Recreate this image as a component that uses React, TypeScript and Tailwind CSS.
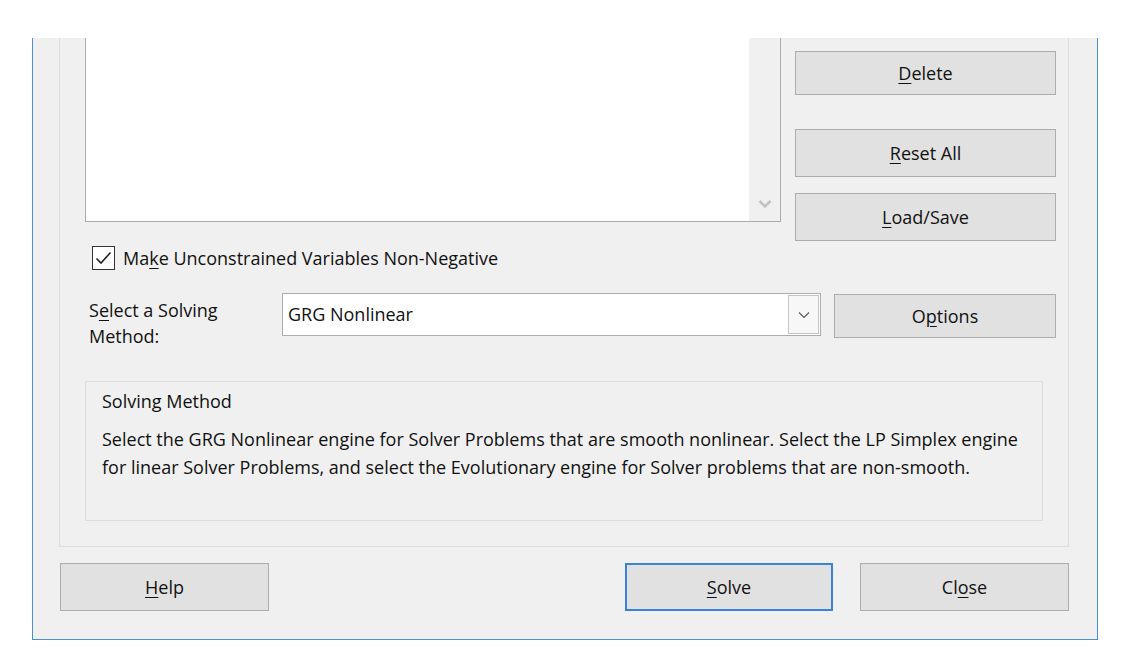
import type { ReactNode } from "react";

const FONT = { fontFamily: '"Open Sans", "Noto Sans", sans-serif' };

function Key({ children }: { children: ReactNode }) {
  return <span className="underline underline-offset-[3px] decoration-1">{children}</span>;
}

function WinButton({
  children,
  className = "",
  focused = false,
}: {
  children: ReactNode;
  className?: string;
  focused?: boolean;
}) {
  return (
    <button
      type="button"
      className={`flex items-center justify-center bg-[#e1e1e1] text-[18px] text-[#111] ${
        focused ? "border-2 border-[#3b83d6]" : "border border-[#adadad]"
      } ${className}`}
    >
      {children}
    </button>
  );
}

export default function App() {
  return (
    <div className="min-h-screen bg-white pt-[38px] pl-[32px]" style={FONT}>
      <div className="w-[1066px] h-[602px] bg-[#f0f0f0] border-x border-b border-[#4b8fd5] flex flex-col">
        {/* Group box (top is cut off) */}
        <div className="ml-[26px] w-[1010px] h-[509px] border-x border-b border-[#dcdcdc] flex flex-col">
          {/* Constraint list + side buttons */}
          <div className="flex items-start">
            <div className="ml-[25px] w-[696px] h-[184px] bg-white border-x border-b border-[#ababab] flex justify-end">
              <div className="w-[31px] bg-[#f0f0f0] flex items-end justify-center pb-[12px]">
                <svg width="14" height="10" viewBox="0 0 14 10">
                  <path d="M1.5 2 L7 7.5 L12.5 2" fill="none" stroke="#c2c2c2" strokeWidth="2.6" />
                </svg>
              </div>
            </div>
            <div className="ml-[14px] w-[261px] flex flex-col">
              <WinButton className="mt-[13px] h-[44px]">
                <Key>D</Key>elete
              </WinButton>
              <WinButton className="mt-[34px] h-[48px]">
                <Key>R</Key>eset All
              </WinButton>
              <WinButton className="mt-[16px] h-[48px]">
                <Key>L</Key>oad/Save
              </WinButton>
            </div>
          </div>

          {/* Non-negative checkbox */}
          <div className="mt-[4px] ml-[32px] flex items-center h-[25px]">
            <div className="w-[23px] h-[24px] border border-[#333] bg-white flex items-center justify-center">
              <svg width="17" height="14" viewBox="0 0 17 14">
                <path d="M1.5 7.5 L6 12 L15.5 1.5" fill="none" stroke="#222" strokeWidth="1.6" />
              </svg>
            </div>
            <span className="ml-[8px] mt-[2px] text-[18px] text-[#111]">
              Ma<Key>k</Key>e Unconstrained Variables Non-Negative
            </span>
          </div>

          {/* Solving method select */}
          <div className="mt-[23px] flex items-start">
            <div className="ml-[29px] w-[193px] mt-[4px] text-[18px] leading-[26px] text-[#111]">
              S<Key>e</Key>lect a Solving
              <br />
              Method:
            </div>
            <div className="w-[539px] h-[43px] bg-white border border-[#adadad] flex items-stretch">
              <div className="flex-1 flex items-center pl-[5px] text-[18px] text-[#111]">GRG Nonlinear</div>
              <div className="w-[31px] m-[1px] border border-[#c4c4c4] bg-[#f7f7f7] flex items-center justify-center">
                <svg width="12" height="8" viewBox="0 0 12 8">
                  <path d="M1 1.5 L6 6.5 L11 1.5" fill="none" stroke="#555" strokeWidth="1.1" />
                </svg>
              </div>
            </div>
            <WinButton className="ml-[13px] mt-[1px] w-[222px] h-[44px]">
              O<Key>p</Key>tions
            </WinButton>
          </div>

          {/* Description */}
          <div className="mt-[32px] ml-[25px] w-[958px] h-[140px] border border-[#dcdcdc] pl-[16px] pt-[6px] text-[18px] text-[#111]">
            <div className="leading-[26px]">Solving Method</div>
            <div className="mt-[11px] leading-[28px]">
              Select the GRG Nonlinear engine for Solver Problems that are smooth nonlinear. Select the LP Simplex engine
              <br />
              for linear Solver Problems, and select the Evolutionary engine for Solver problems that are non-smooth.
            </div>
          </div>
        </div>

        {/* Bottom buttons */}
        <div className="mt-[16px] flex items-start">
          <WinButton className="ml-[27px] w-[209px] h-[48px]">
            <Key>H</Key>elp
          </WinButton>
          <div className="flex-1" />
          <WinButton focused className="w-[208px] h-[48px]">
            <Key>S</Key>olve
          </WinButton>
          <WinButton className="ml-[27px] mr-[28px] w-[209px] h-[48px]">
            Cl<Key>o</Key>se
          </WinButton>
        </div>
      </div>
    </div>
  );
}
